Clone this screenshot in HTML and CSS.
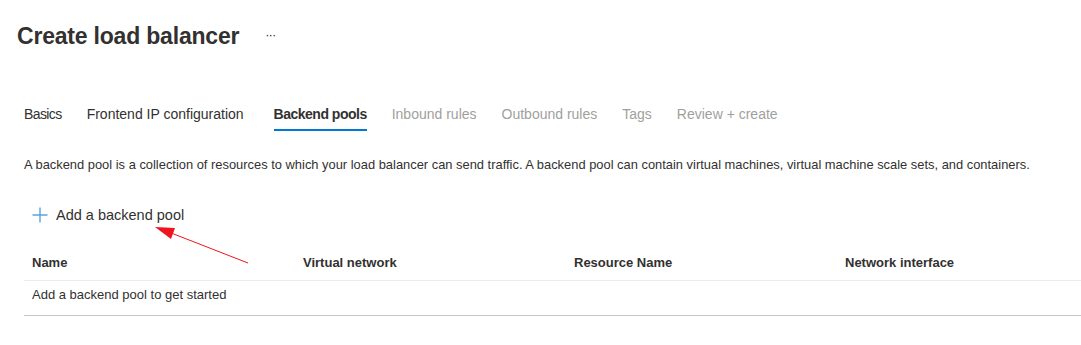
FILE: index.html
```html
<!DOCTYPE html>
<html>
<head>
<meta charset="utf-8">
<link rel="stylesheet" href="styles.css">
</head>
<body>
<div class="page">
  <header class="title-row">
    <h1 class="title">Create load balancer</h1>
    <span class="more">···</span>
  </header>
  <nav class="tabs">
    <span class="tab tab-basics">Basics</span>
    <span class="tab">Frontend IP configuration</span>
    <span class="tab active">Backend pools</span>
    <span class="tab disabled">Inbound rules</span>
    <span class="tab disabled">Outbound rules</span>
    <span class="tab disabled">Tags</span>
    <span class="tab disabled">Review + create</span>
  </nav>
  <p class="desc">A backend pool is a collection of resources to which your load balancer can send traffic. A backend pool can contain virtual machines, virtual machine scale sets, and containers.</p>
  <div class="add-row">
    <span class="add-btn">
      <svg class="plus" width="16" height="16" viewBox="0 0 16 16"><path d="M8 0.5v15M0.5 8h15" stroke="#5aa2e0" stroke-width="1.4" fill="none"/></svg>
      <span>Add a backend pool</span>
    </span>
  </div>
  <div class="table">
    <div class="thead">
      <div class="cell">Name</div>
      <div class="cell">Virtual network</div>
      <div class="cell">Resource Name</div>
      <div class="cell">Network interface</div>
    </div>
    <div class="trow">
      <div class="cell">Add a backend pool to get started</div>
    </div>
  </div>
  <svg class="arrow" width="105" height="50" viewBox="0 0 105 50">
    <line x1="98" y1="43" x2="16" y2="11" stroke="#f0141e" stroke-width="1"/>
    <polygon points="5,7 25,8 21,19" fill="#f0141e"/>
  </svg>
</div>
</body>
</html>
```
FILE: styles.css
```css
html, body {
  margin: 0;
  padding: 0;
  background: #fff;
  overflow: hidden;
}
body {
  font-family: "Segoe UI", "Liberation Sans", Arial, sans-serif;
  color: #323130;
  font-size: 13px;
}
.page {
  position: relative;
  width: 1081px;
  height: 345px;
  overflow: hidden;
}
.title-row {
  display: flex;
  align-items: center;
  padding: 18px 0 0 17px;
  height: 36px;
}
.title {
  margin: 0;
  font-size: 23px;
  font-weight: 600;
  letter-spacing: -0.2px;
  color: #323130;
}
.more {
  margin-left: 26px;
  font-size: 13px;
  color: #323130;
  letter-spacing: -1px;
  position: relative;
  top: -2px;
}
.tabs {
  display: flex;
  gap: 25px;
  margin: 48px 0 0 24px;
}
.tab {
  padding: 4px 0 7px;
  font-size: 14px;
  border-bottom: 2px solid transparent;
  color: #323130;
}
.tab-basics {
  letter-spacing: -0.6px;
}
.tab.active {
  font-weight: 600;
  letter-spacing: -0.5px;
  margin-left: 5px;
  border-bottom-color: #0078d4;
}
.tab.disabled {
  color: #a19f9d;
}
.desc {
  margin: 26px 0 0 24px;
  font-size: 12.9px;
  line-height: 16px;
}
.add-row {
  margin: 34px 0 0 32px;
  height: 22px;
}
.add-btn {
  display: inline-flex;
  align-items: center;
  gap: 8px;
  font-size: 14.5px;
}
.table {
  margin: 16px 0 0 24px;
  width: 1084px;
}
.thead, .trow {
  display: grid;
  grid-template-columns: repeat(4, 271px);
}
.thead {
  height: 35px;
  align-items: center;
  border-bottom: 1px solid #edebe9;
  font-weight: 600;
}
.trow {
  height: 34px;
  align-items: start;
  border-bottom: 1px solid #c8c6c4;
}
.trow .cell {
  grid-column: 1 / 3;
  padding-top: 6px;
  line-height: 16px;
}
.cell {
  padding-left: 8px;
}
.arrow {
  position: absolute;
  left: 150px;
  top: 220px;
}
```
